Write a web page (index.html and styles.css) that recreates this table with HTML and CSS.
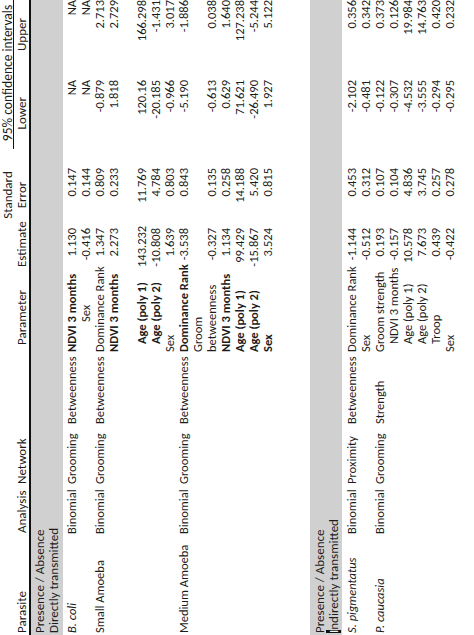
FILE: index.html
```html
<!DOCTYPE html>
<html>
<head>
<meta charset="utf-8">
<title>Parasite models</title>
<link rel="stylesheet" href="styles.css">
</head>
<body>
<div class="page">
  <div class="rot">
    <table class="t">
      <colgroup>
        <col class="c-par"><col class="c-ana"><col class="c-net"><col class="c-net2"><col class="c-prm">
        <col class="c-est"><col class="c-err"><col class="c-low"><col class="c-up">
      </colgroup>
      <thead>
        <tr class="h1">
          <th></th><th></th><th></th><th></th><th></th><th></th>
          <th class="ctr">Standard</th>
          <th colspan="2" class="ci"><div class="ci-in">95% confidence intervals</div></th>
        </tr>
        <tr class="h2">
          <th class="lft">Parasite</th>
          <th class="lft">Analysis</th>
          <th class="lft">Network</th>
          <th></th>
          <th class="lft h-prm">Parameter</th>
          <th class="num">Estimate</th>
          <th class="ctr">Error</th>
          <th class="num h-low">Lower</th>
          <th class="num h-up">Upper</th>
        </tr>
      </thead>
      <tbody>
        <tr class="band"><td colspan="9"><div>Presence / Absence</div><div>Directly transmitted</div></td></tr>
        <tr class="first"><td><i>B. coli</i></td><td>Binomial</td><td>Grooming</td><td>Betweenness</td><td class="b">NDVI 3 months</td><td class="num">1.130</td><td class="num">0.147</td><td class="num">NA</td><td class="num">NA</td></tr>
        <tr><td></td><td></td><td></td><td></td><td class="ind2">Sex</td><td class="num">-0.416</td><td class="num">0.144</td><td class="num">NA</td><td class="num">NA</td></tr>
        <tr><td>Small Amoeba</td><td>Binomial</td><td>Grooming</td><td>Betweenness</td><td>Dominance Rank</td><td class="num">1.347</td><td class="num">0.809</td><td class="num">-0.879</td><td class="num">2.713</td></tr>
        <tr><td></td><td></td><td></td><td></td><td class="b">NDVI 3 months</td><td class="num">2.273</td><td class="num">0.233</td><td class="num">1.818</td><td class="num">2.729</td></tr>
        <tr class="blank"><td colspan="9"></td></tr>
        <tr><td></td><td></td><td></td><td></td><td class="b ind1">Age (poly 1)</td><td class="num">143.232</td><td class="num">11.769</td><td class="num">120.16</td><td class="num">166.298</td></tr>
        <tr><td></td><td></td><td></td><td></td><td class="b ind1">Age (poly 2)</td><td class="num">-10.808</td><td class="num">4.784</td><td class="num">-20.185</td><td class="num">-1.431</td></tr>
        <tr><td></td><td></td><td></td><td></td><td>Sex</td><td class="num">1.639</td><td class="num">0.803</td><td class="num">-0.966</td><td class="num">3.017</td></tr>
        <tr><td>Medium Amoeba</td><td>Binomial</td><td>Grooming</td><td>Betweenness</td><td class="b">Dominance Rank</td><td class="num">-3.538</td><td class="num">0.843</td><td class="num">-5.190</td><td class="num">-1.886</td></tr>
        <tr><td></td><td></td><td></td><td></td><td>Groom</td><td></td><td></td><td></td><td></td></tr>
        <tr><td></td><td></td><td></td><td></td><td>betweenness</td><td class="num">-0.327</td><td class="num">0.135</td><td class="num">-0.613</td><td class="num">0.038</td></tr>
        <tr><td></td><td></td><td></td><td></td><td class="b">NDVI 3 months</td><td class="num">1.134</td><td class="num">0.258</td><td class="num">0.629</td><td class="num">1.640</td></tr>
        <tr><td></td><td></td><td></td><td></td><td class="b">Age (poly 1)</td><td class="num">99.429</td><td class="num">14.188</td><td class="num">71.621</td><td class="num">127.238</td></tr>
        <tr><td></td><td></td><td></td><td></td><td class="b">Age (poly 2)</td><td class="num">-15.867</td><td class="num">5.420</td><td class="num">-26.490</td><td class="num">-5.244</td></tr>
        <tr><td></td><td></td><td></td><td></td><td class="b">Sex</td><td class="num">3.524</td><td class="num">0.815</td><td class="num">1.927</td><td class="num">5.122</td></tr>
        <tr class="gap"><td colspan="9"></td></tr>
        <tr class="band band2"><td colspan="9"><div>Presence / Absence</div><div><span class="sel">I</span>ndirectly transmitted</div></td></tr>
        <tr class="first2"><td><i>S. pigmentatus</i></td><td>Binomial</td><td>Proximity</td><td>Betweenness</td><td>Dominance Rank</td><td class="num">-1.144</td><td class="num">0.453</td><td class="num">-2.102</td><td class="num">0.356</td></tr>
        <tr><td></td><td></td><td></td><td></td><td>Sex</td><td class="num">-0.512</td><td class="num">0.312</td><td class="num">-0.481</td><td class="num">0.342</td></tr>
        <tr><td><i>P. caucasia</i></td><td>Binomial</td><td>Grooming</td><td>Strength</td><td>Groom strength</td><td class="num">0.193</td><td class="num">0.107</td><td class="num">-0.122</td><td class="num">0.373</td></tr>
        <tr><td></td><td></td><td></td><td></td><td class="ind1">NDVI 3 months</td><td class="num">-0.157</td><td class="num">0.104</td><td class="num">-0.307</td><td class="num">0.126</td></tr>
        <tr><td></td><td></td><td></td><td></td><td class="ind1">Age (poly 1)</td><td class="num">10.578</td><td class="num">4.836</td><td class="num">-4.532</td><td class="num">19.984</td></tr>
        <tr><td></td><td></td><td></td><td></td><td class="ind1">Age (poly 2)</td><td class="num">7.673</td><td class="num">3.745</td><td class="num">-3.555</td><td class="num">14.763</td></tr>
        <tr><td></td><td></td><td></td><td></td><td class="ind1">Troop</td><td class="num">0.439</td><td class="num">0.257</td><td class="num">-0.294</td><td class="num">0.420</td></tr>
        <tr><td></td><td></td><td></td><td></td><td>Sex</td><td class="num">-0.422</td><td class="num">0.278</td><td class="num">-0.295</td><td class="num">0.232</td></tr>
      </tbody>
    </table>
  </div>
</div>
</body>
</html>
```
FILE: styles.css
```css
html, body {
  margin: 0;
  padding: 0;
  background: #ffffff;
}
.page {
  width: 474px;
  height: 635px;
  overflow: hidden;
  position: relative;
}
.rot {
  width: 635px;
  height: 474px;
  transform-origin: top left;
  transform: rotate(-90deg) translateX(-100%);
}
.t {
  border-collapse: collapse;
  table-layout: fixed;
  width: 638px;
  font-family: Carlito, Lato, "Liberation Sans", sans-serif;
  font-size: 12.5px;
  color: #1c1c1c;
  white-space: nowrap;
}
.c-par { width: 100px; }
.c-ana { width: 51px; }
.c-net { width: 60px; }
.c-net2 { width: 72px; }
.c-prm { width: 85px; }
.c-est { width: 42px; }
.c-err { width: 60px; }
.c-low { width: 88px; }
.c-up { width: 80px; }
th, td {
  padding: 0;
  height: 14px;
  line-height: 14px;
  font-weight: normal;
  text-align: left;
  vertical-align: top;
  overflow: visible;
}
th { font-size: 13px; }
td:nth-child(1) { padding-left: 2px; }
td:nth-child(2) { padding-left: 1px; }
td:nth-child(3) { padding-left: 0; }
td:nth-child(4) { padding-left: 0; }
td:nth-child(5) { padding-left: 0; }
.lft:nth-child(1) { padding-left: 2px; }
.lft:nth-child(2) { padding-left: 2px; }
.lft:nth-child(3) { padding-left: 0; }
.h-prm { padding-left: 7px; }
.num { text-align: right; padding-right: 3px; }
.ctr { text-align: center; }
.h1 th { padding-top: 2px; height: 12px; line-height: 12px; }
.h2 th { height: 15px; line-height: 15px; border-bottom: 2px solid #111; }
.h-low { padding-right: 20px; }
.h-up { padding-right: 21px; }
.ci-in {
  margin-left: 16px;
  text-align: center;
  border-bottom: 1px solid #111;
  line-height: 12px;
  height: 11px;
  font-size: 13.5px;
}
.band td {
  background: #d0d0d0;
  padding: 2px 2px 2px 2px;
  height: auto;
  font-size: 13px;
}
.band div { line-height: 14px; }
.band2 td { padding: 3px 2px 1px 2px; }
.sel { background: #111; color: #f4f4f4; }
.first td { padding-top: 2px; }
.first2 td { padding-top: 3px; }
.blank td { height: 14px; }
.gap td { height: 35px; }
.b { font-weight: bold; }
.ind1 { padding-left: 8px !important; }
.ind2 { padding-left: 30px !important; }
```
